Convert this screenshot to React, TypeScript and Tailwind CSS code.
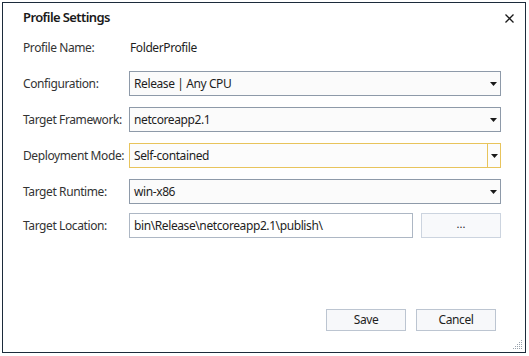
import React from "react";

const font = { fontFamily: '"Segoe UI", "Noto Sans", "Open Sans", sans-serif' };

function Arrow() {
  return (
    <svg width="7" height="4" viewBox="0 0 7 4" className="block">
      <path d="M0 0 H7 L3.5 4 Z" fill="#1a1a1a" />
    </svg>
  );
}

function Combo({ value, focused }: { value: string; focused?: boolean }) {
  return (
    <div
      className={
        "flex h-[25px] items-stretch border " +
        (focused ? "border-[#e8c45c] bg-[#fcfcfc]" : "border-[#8e9aa9] bg-[#fbfbfb]")
      }
    >
      <div className="flex flex-1 items-center pl-[4px] text-[12px] tracking-[-0.4px] text-[#1e1e1e]">{value}</div>
      <div
        className={
          "flex w-[13px] items-center justify-center " + (focused ? "border-l border-[#e8c45c]" : "")
        }
      >
        <Arrow />
      </div>
    </div>
  );
}

function Label({ children, className = "" }: { children: React.ReactNode; className?: string }) {
  return (
    <div className={"flex items-center whitespace-nowrap text-[12px] tracking-[-0.4px] text-[#333333] " + className}>
      {children}
    </div>
  );
}

export default function App() {
  return (
    <div className="h-[356px] w-[529px] bg-white p-[2px]" style={font}>
      <div className="flex h-[351px] w-[524px] flex-col border border-[#1c2b3b] bg-white">
        <div className="flex h-[30px] items-center justify-between pl-[20px] pr-[11px]">
          <div className="text-[13px] font-semibold tracking-[-0.6px] text-[#1a1a1a]">Profile Settings</div>
          <svg width="9" height="9" viewBox="0 0 9 9">
            <path d="M0.5 0.5 L8.5 8.5 M8.5 0.5 L0.5 8.5" stroke="#1a1a1a" strokeWidth="1.3" />
          </svg>
        </div>
        <div className="mt-[2px] grid grid-cols-[106px_372px] gap-y-[11px] pl-[20px]">
          <Label>Profile Name:</Label>
          <div className="flex h-[25px] items-center pl-[1px] text-[12px] tracking-[-0.4px] text-[#1e1e1e]">FolderProfile</div>

          <Label>Configuration:</Label>
          <Combo value="Release | Any CPU" />

          <Label>Target Framework:</Label>
          <Combo value="netcoreapp2.1" />

          <Label>Deployment Mode:</Label>
          <Combo value="Self-contained" focused />

          <Label>Target Runtime:</Label>
          <Combo value="win-x86" />

          <Label className="-mt-[2px]">Target Location:</Label>
          <div className="-mt-[2px] flex h-[25px] gap-[8px]">
            <div className="flex flex-1 items-center border border-[#adb7c4] bg-white pl-[4px] text-[12px] tracking-[-0.4px] text-[#1e1e1e]">
              bin\Release\netcoreapp2.1\publish\
            </div>
            <div className="flex w-[80px] items-center justify-center border border-[#ccd4df] bg-[#f8f9fb] pb-[2px] text-[11px] text-[#1e1e1e]">
              ...
            </div>
          </div>
        </div>
        <div className="flex-1" />
        <div className="flex justify-end gap-[10px] pr-[29px]">
          <div className="flex h-[22px] w-[80px] items-center justify-center border border-[#bcc5d1] bg-[#f7f8fa] text-[12px] tracking-[-0.4px] text-[#1e1e1e]">
            Save
          </div>
          <div className="flex h-[22px] w-[80px] items-center justify-center border border-[#bcc5d1] bg-[#f7f8fa] text-[12px] tracking-[-0.4px] text-[#1e1e1e]">
            Cancel
          </div>
        </div>
        <div className="flex h-[21px] items-end justify-end pb-[2px] pr-[2px]">
          <svg width="10" height="10" viewBox="0 0 10 10">
            {[
              [8, 0], [8, 2], [6, 2], [8, 4], [6, 4], [4, 4], [8, 6], [6, 6], [4, 6], [2, 6], [8, 8], [6, 8], [4, 8], [2, 8], [0, 8],
            ].map(([x, y], i) => (
              <rect key={i} x={x} y={y} width="1" height="1" fill="#9aa3ad" />
            ))}
          </svg>
        </div>
      </div>
    </div>
  );
}
